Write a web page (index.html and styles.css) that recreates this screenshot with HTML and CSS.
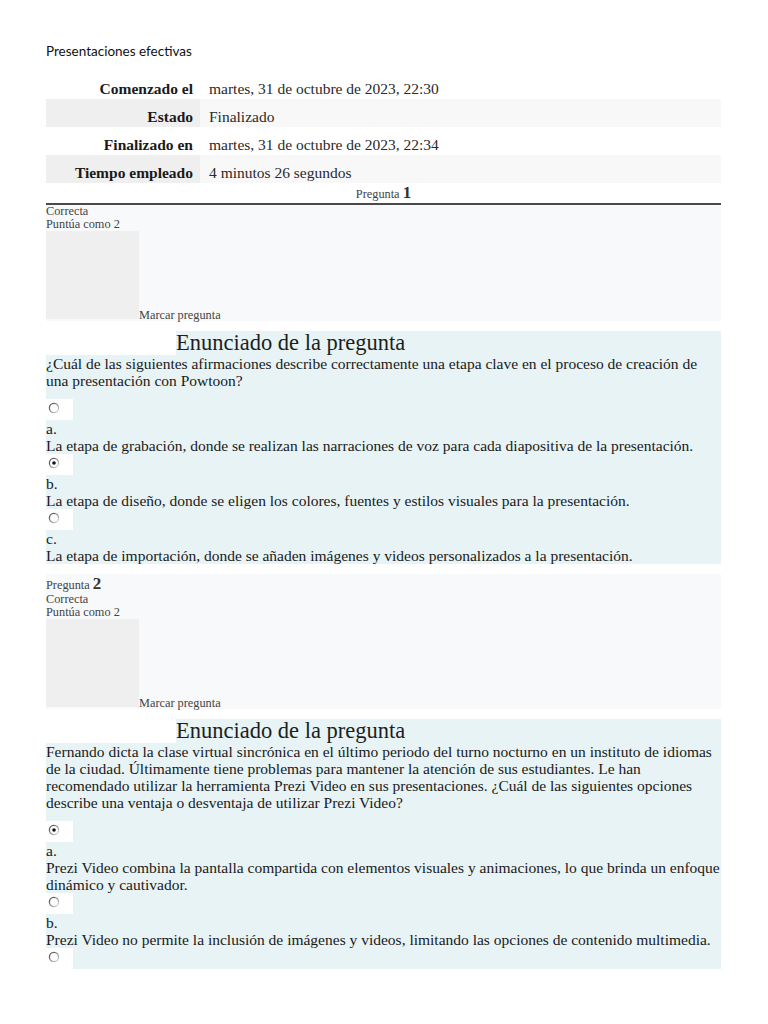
FILE: index.html
```html
<!DOCTYPE html>
<html lang="es">
<head>
<meta charset="utf-8">
<title>Presentaciones efectivas</title>
<link rel="stylesheet" href="styles.css">
</head>
<body>
<div class="page">
  <div class="course">Presentaciones efectivas</div>

  <table class="summary">
    <tr><th>Comenzado el</th><td>martes, 31 de octubre de 2023, 22:30</td></tr>
    <tr class="alt"><th>Estado</th><td>Finalizado</td></tr>
    <tr><th>Finalizado en</th><td>martes, 31 de octubre de 2023, 22:34</td></tr>
    <tr class="alt"><th>Tiempo empleado</th><td>4 minutos 26 segundos</td></tr>
  </table>

  <div class="qno qno-center">Pregunta <b>1</b></div>
  <div class="info info-ruled">
    <div class="small">Correcta</div>
    <div class="small">Puntúa como 2</div>
    <div class="small flagline"><span class="flagbox"></span>Marcar pregunta</div>
  </div>

  <div class="qhead">Enunciado de la pregunta</div>
  <div class="formulation">
    <div class="qtext">¿Cuál de las siguientes afirmaciones describe correctamente una etapa clave en el proceso de creación de una presentación con Powtoon?</div>
    <div class="opt">
      <div class="radiobox"><svg class="radio" viewBox="0 0 12 12"><defs><linearGradient id="rg" x1="0" y1="0" x2="1" y2="1"><stop offset="0" stop-color="#444"/><stop offset="0.5" stop-color="#888"/><stop offset="1" stop-color="#e8e8e8"/></linearGradient></defs><circle cx="6" cy="6" r="4.6" fill="#fff" stroke="url(#rg)" stroke-width="1.3"/></svg></div>
      <div class="letter">a.</div>
      <div class="atext">La etapa de grabación, donde se realizan las narraciones de voz para cada diapositiva de la presentación.</div>
    </div>
    <div class="opt">
      <div class="radiobox"><svg class="radio" viewBox="0 0 12 12"><circle cx="6" cy="6" r="4.6" fill="#fff" stroke="url(#rg)" stroke-width="1.3"/><circle cx="6" cy="6" r="1.8" fill="#111"/></svg></div>
      <div class="letter">b.</div>
      <div class="atext">La etapa de diseño, donde se eligen los colores, fuentes y estilos visuales para la presentación.</div>
    </div>
    <div class="opt">
      <div class="radiobox"><svg class="radio" viewBox="0 0 12 12"><circle cx="6" cy="6" r="4.6" fill="#fff" stroke="url(#rg)" stroke-width="1.3"/></svg></div>
      <div class="letter">c.</div>
      <div class="atext">La etapa de importación, donde se añaden imágenes y videos personalizados a la presentación.</div>
    </div>
  </div>

  <div class="info info-gap">
    <div class="qno">Pregunta <b>2</b></div>
    <div class="small">Correcta</div>
    <div class="small">Puntúa como 2</div>
    <div class="small flagline"><span class="flagbox"></span>Marcar pregunta</div>
  </div>

  <div class="qhead">Enunciado de la pregunta</div>
  <div class="formulation">
    <div class="qtext">Fernando dicta la clase virtual sincrónica en el último periodo del turno nocturno en un instituto de idiomas de la ciudad. Últimamente tiene problemas para mantener la atención de sus estudiantes. Le han recomendado utilizar la herramienta Prezi Video en sus presentaciones. ¿Cuál de las siguientes opciones describe una ventaja o desventaja de utilizar Prezi Video?</div>
    <div class="opt">
      <div class="radiobox"><svg class="radio" viewBox="0 0 12 12"><circle cx="6" cy="6" r="4.6" fill="#fff" stroke="url(#rg)" stroke-width="1.3"/><circle cx="6" cy="6" r="1.8" fill="#111"/></svg></div>
      <div class="letter">a.</div>
      <div class="atext">Prezi Video combina la pantalla compartida con elementos visuales y animaciones, lo que brinda un enfoque dinámico y cautivador.</div>
    </div>
    <div class="opt">
      <div class="radiobox"><svg class="radio" viewBox="0 0 12 12"><circle cx="6" cy="6" r="4.6" fill="#fff" stroke="url(#rg)" stroke-width="1.3"/></svg></div>
      <div class="letter">b.</div>
      <div class="atext">Prezi Video no permite la inclusión de imágenes y videos, limitando las opciones de contenido multimedia.</div>
    </div>
    <div class="opt">
      <div class="radiobox"><svg class="radio" viewBox="0 0 12 12"><circle cx="6" cy="6" r="4.6" fill="#fff" stroke="url(#rg)" stroke-width="1.3"/></svg></div>
    </div>
  </div>
</div>
</body>
</html>
```

FILE: styles.css
```css
html, body {
  margin: 0;
  padding: 0;
  background: #ffffff;
}

body {
  font-family: "Liberation Serif", "Times New Roman", serif;
  color: #1e1e1e;
}

.page {
  width: 675px;
  padding: 42px 0 0 46px;
}

.course {
  font-family: Lato, "Noto Sans", sans-serif;
  font-size: 13.5px;
  line-height: 18px;
  color: #111;
  margin-bottom: 11px;
}

.summary {
  width: 675px;
  border-collapse: collapse;
  font-size: 15.5px;
}

.summary th,
.summary td {
  height: 21px;
  line-height: 21px;
  padding-top: 7px;
  padding-bottom: 0;
  vertical-align: top;
}

.summary th {
  width: 147px;
  text-align: right;
  font-weight: bold;
  color: #1a1a1a;
  padding-left: 0;
  padding-right: 7px;
  white-space: nowrap;
}

.summary td {
  padding-left: 9px;
  color: #2a2a2a;
}

.summary .alt th {
  background: #efefef;
}

.summary .alt td {
  background: #f8f8f8;
}

.qno {
  font-size: 12.3px;
  line-height: 19px;
  height: 19px;
  color: #444;
}

.qno b {
  font-size: 17px;
  color: #333;
}

.qno-center {
  text-align: center;
  height: 20px;
  line-height: 20px;
}

.info {
  background: #f8f9fa;
  width: 675px;
}

.info-ruled {
  border-top: 2px solid #4a4a4a;
}

.info-gap {
  margin-top: 10px;
}

.small {
  font-size: 12.3px;
  line-height: 13px;
  color: #444;
}

.small.flagline {
  line-height: 11px;
}

.flagbox {
  display: inline-block;
  width: 93px;
  height: 88px;
  background: #efefef;
  vertical-align: baseline;
}

.qhead {
  margin: 10px 0 0 130px;
  background: #e7f3f5;
  font-size: 22.5px;
  line-height: 24px;
  height: 24px;
  color: #1e1e1e;
}

.formulation {
  background: #e7f3f5;
  width: 675px;
}

.qtext {
  font-size: 15.5px;
  line-height: 17px;
  padding-bottom: 10px;
  color: #1a1a1a;
}

.opt {
  font-size: 15.5px;
  line-height: 17px;
  color: #1a1a1a;
}

.radiobox {
  width: 27px;
  height: 21px;
  background: #ffffff;
  display: flex;
  align-items: flex-start;
}

.radio {
  width: 12px;
  height: 12px;
  margin: 3px 0 0 2px;
}
```
